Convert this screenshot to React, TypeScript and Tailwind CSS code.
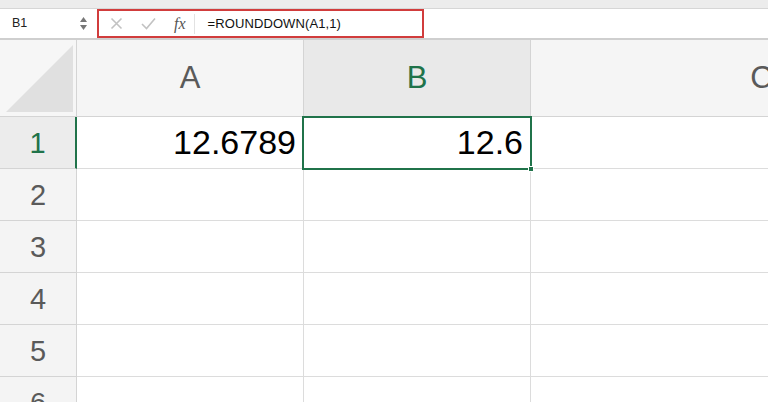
import React from 'react';

const rows = [1, 2, 3, 4, 5, 6];

const cellData: Record<string, string> = {
  A1: '12.6789',
  B1: '12.6',
};

export default function App() {
  return (
    <div className="w-[768px] h-[402px] overflow-hidden bg-white font-['Liberation_Sans',sans-serif] relative">
      {/* top chrome strip */}
      <div className="h-[9px] bg-[#ececec] border-b border-[#d6d6d6]" />

      {/* name box + formula bar */}
      <div className="h-[31px] flex items-stretch border-b-2 border-[#cfcfcf] bg-white">
        <div className="w-[93px] flex items-center justify-between pl-[12px] pr-[6px]">
          <span className="text-[12.5px] text-[#222]">B1</span>
          <div className="flex flex-col gap-[3px] items-center">
            <svg width="7" height="5" viewBox="0 0 7 5"><path d="M3.5 0 L7 5 L0 5 Z" fill="#777" /></svg>
            <svg width="7" height="5" viewBox="0 0 7 5"><path d="M0 0 L7 0 L3.5 5 Z" fill="#777" /></svg>
          </div>
        </div>
        <div className="w-[4px]" />
        <div className="w-[327px] h-[29px] border-2 border-[#d13c3c] flex items-center">
          <div className="flex items-center pl-[11px] gap-[18px]">
            <svg width="13" height="13" viewBox="0 0 13 13">
              <path d="M1.5 1.5 L11.5 11.5 M11.5 1.5 L1.5 11.5" stroke="#c2c2c2" strokeWidth="1.6" fill="none" />
            </svg>
            <svg width="15" height="13" viewBox="0 0 15 13">
              <path d="M1 7 L5.5 11.5 L14 1.5" stroke="#c2c2c2" strokeWidth="1.6" fill="none" />
            </svg>
            <span className="font-['Liberation_Serif',serif] italic text-[16px] text-[#555] leading-none">fx</span>
          </div>
          <div className="w-px h-[20px] bg-[#e2e2e2] ml-[8px]" />
          <span className="ml-[13px] text-[13px] text-[#111] tracking-[0.1px]">=ROUNDDOWN(A1,1)</span>
        </div>
      </div>

      {/* grid */}
      <div className="relative">
        <div className="grid grid-cols-[77px_227px_227px_462px] grid-rows-[77px_repeat(6,52px)]">
          {/* corner */}
          <div className="bg-[#f6f6f6] border-r border-b border-[#d4d4d4] relative">
            <svg className="absolute left-[6px] top-[5px]" width="67" height="67" viewBox="0 0 67 67">
              <path d="M67 0 L67 67 L0 67 Z" fill="#e0e0e0" />
            </svg>
          </div>
          {['A', 'B', 'C'].map((c) => (
            <div
              key={c}
              className={
                c === 'B'
                  ? 'bg-[#e9e9e9] border-r border-b border-[#d4d4d4] flex items-center justify-center text-[31px] text-[#20734a]'
                  : 'bg-[#f5f5f5] border-r border-b border-[#d4d4d4] flex items-center justify-center text-[31px] text-[#5a5a5a]'
              }
            >
              {c}
            </div>
          ))}

          {rows.map((r) => (
            <React.Fragment key={r}>
              <div
                className={
                  r === 1
                    ? 'bg-[#ececec] border-r-2 border-r-[#20734a] border-b border-b-[#d4d4d4] flex items-center justify-center pt-[2px] text-[29px] text-[#20734a]'
                    : 'bg-[#f4f4f4] border-r border-b border-[#d4d4d4] flex items-center justify-center pt-[3px] text-[29px] text-[#5a5a5a]'
                }
              >
                {r}
              </div>
              {['A', 'B', 'C'].map((c) => (
                <div
                  key={c}
                  className="border-r border-b border-[#dcdcdc] flex items-center justify-end pr-[7px] text-[34px] text-black"
                >
                  {cellData[c + r] ?? ''}
                </div>
              ))}
            </React.Fragment>
          ))}
        </div>

        {/* selection on B1 */}
        <div className="absolute left-[302px] top-[76px] w-[230px] h-[54px] border-2 border-[#20734a] pointer-events-none">
          <div className="absolute -right-[4px] -bottom-[4px] w-[6px] h-[6px] bg-[#20734a] border border-white" />
        </div>
      </div>
    </div>
  );
}
